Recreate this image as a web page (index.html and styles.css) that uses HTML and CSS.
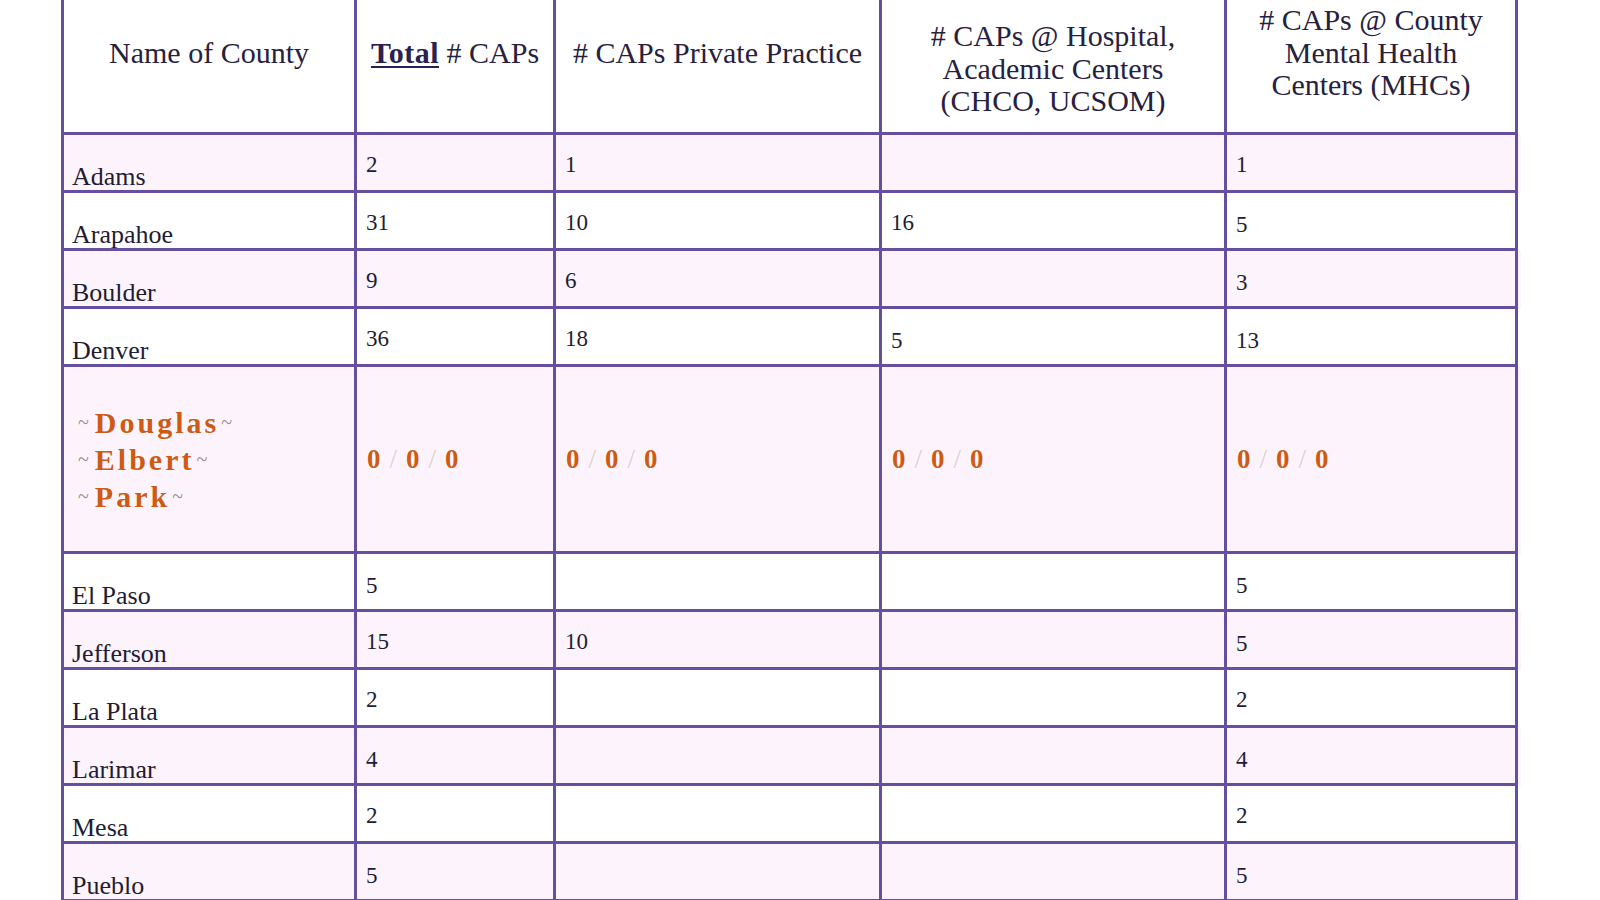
FILE: index.html
```html
<!DOCTYPE html>
<html lang="en">
<head>
<meta charset="utf-8">
<title>CAPs by County</title>
<link rel="stylesheet" href="styles.css">
</head>
<body>
<div class="sheet" role="table">
  <div class="row head" role="row">
    <div class="cell th" role="columnheader">Name of County</div>
    <div class="cell th" role="columnheader"><span class="total">Total</span>&nbsp;# CAPs</div>
    <div class="cell th" role="columnheader"># CAPs Private Practice</div>
    <div class="cell th th-lower" role="columnheader"># CAPs @ Hospital,<br>Academic Centers<br>(CHCO, UCSOM)</div>
    <div class="cell th" role="columnheader"># CAPs @ County<br>Mental Health<br>Centers (MHCs)</div>
  </div>
  <div class="row alt" role="row">
    <div class="cell name">Adams</div><div class="cell num">2</div><div class="cell num">1</div><div class="cell num"></div><div class="cell num">1</div>
  </div>
  <div class="row" role="row">
    <div class="cell name">Arapahoe</div><div class="cell num">31</div><div class="cell num">10</div><div class="cell num">16</div><div class="cell num low">5</div>
  </div>
  <div class="row alt" role="row">
    <div class="cell name">Boulder</div><div class="cell num">9</div><div class="cell num">6</div><div class="cell num"></div><div class="cell num low">3</div>
  </div>
  <div class="row" role="row">
    <div class="cell name">Denver</div><div class="cell num">36</div><div class="cell num">18</div><div class="cell num low">5</div><div class="cell num low">13</div>
  </div>
  <div class="row alt tall" role="row">
    <div class="cell fancy-names">
      <div class="fancy"><span class="tl">~</span>Douglas<span class="tl">~</span></div>
      <div class="fancy"><span class="tl">~</span>Elbert<span class="tl">~</span></div>
      <div class="fancy"><span class="tl">~</span>Park<span class="tl">~</span></div>
    </div>
    <div class="cell zeros">0<span class="sl">/</span>0<span class="sl">/</span>0</div>
    <div class="cell zeros">0<span class="sl">/</span>0<span class="sl">/</span>0</div>
    <div class="cell zeros">0<span class="sl">/</span>0<span class="sl">/</span>0</div>
    <div class="cell zeros">0<span class="sl">/</span>0<span class="sl">/</span>0</div>
  </div>
  <div class="row" role="row">
    <div class="cell name">El Paso</div><div class="cell num low">5</div><div class="cell num"></div><div class="cell num"></div><div class="cell num low">5</div>
  </div>
  <div class="row alt" role="row">
    <div class="cell name">Jefferson</div><div class="cell num">15</div><div class="cell num">10</div><div class="cell num"></div><div class="cell num low">5</div>
  </div>
  <div class="row" role="row">
    <div class="cell name">La Plata</div><div class="cell num">2</div><div class="cell num"></div><div class="cell num"></div><div class="cell num">2</div>
  </div>
  <div class="row alt" role="row">
    <div class="cell name">Larimar</div><div class="cell num low">4</div><div class="cell num"></div><div class="cell num"></div><div class="cell num low">4</div>
  </div>
  <div class="row" role="row">
    <div class="cell name">Mesa</div><div class="cell num">2</div><div class="cell num"></div><div class="cell num"></div><div class="cell num">2</div>
  </div>
  <div class="row alt" role="row">
    <div class="cell name">Pueblo</div><div class="cell num low">5</div><div class="cell num"></div><div class="cell num"></div><div class="cell num low">5</div>
  </div>
</div>
</body>
</html>
```
FILE: styles.css
```css
html, body {
  margin: 0;
  padding: 0;
  background: #ffffff;
}

body {
  font-family: "Liberation Serif", "Times New Roman", serif;
  color: #221c33;
  overflow: hidden;
}

.sheet {
  margin: -26px 0 0 61px;
  width: 1457px;
  border-left: 3px solid #654f9e;
}

.row {
  display: grid;
  grid-template-columns: 293px 199px 326px 345px 291px;
  height: 58px;
  background: #ffffff;
}

.row.alt {
  background: #fcf3fc;
}

.row.head {
  height: 161px;
}

.row.tall {
  height: 187px;
}

.cell {
  box-sizing: border-box;
  border-right: 3px solid #654f9e;
  border-bottom: 3px solid #654f9e;
  padding: 0 8px;
  overflow: hidden;
  white-space: nowrap;
}

.th {
  display: flex;
  align-items: center;
  justify-content: center;
  text-align: center;
  font-size: 30px;
  line-height: 32.5px;
  color: #272140;
}

.th-lower {
  padding-top: 32px;
}

.total {
  font-weight: bold;
  letter-spacing: 0.5px;
  text-decoration: underline;
  text-decoration-thickness: 2px;
  text-underline-offset: 3px;
  color: #2c1f52;
}

.name {
  font-size: 26px;
  line-height: 26px;
  padding-top: 29px;
  padding-left: 8px;
}

.num {
  font-size: 23px;
  line-height: 26px;
  padding-top: 17px;
  padding-left: 9px;
}

.num.low {
  padding-top: 19px;
}

.fancy-names {
  display: flex;
  flex-direction: column;
  justify-content: center;
  padding-left: 12px;
}

.fancy {
  font-size: 30px;
  line-height: 36px;
  font-weight: bold;
  letter-spacing: 3px;
  color: #cf5a17;
  text-shadow: 0 0 2px #ffffff, 0 0 3px #ffffff;
}

.tl {
  display: inline-block;
  font-size: 20px;
  font-weight: normal;
  letter-spacing: 0;
  color: #9c8c88;
  margin: 0 6px 0 2px;
  vertical-align: 4px;
}

.fancy .tl:last-child {
  margin: 0 0 0 2px;
}

.zeros {
  display: flex;
  align-items: center;
  padding-left: 10px;
  font-size: 27px;
  font-weight: bold;
  letter-spacing: 9px;
  color: #cf5a17;
  text-shadow: 0 0 2px #ffffff, 0 0 3px #ffffff;
}

.sl {
  font-weight: normal;
  color: #d9cfd2;
}
```
